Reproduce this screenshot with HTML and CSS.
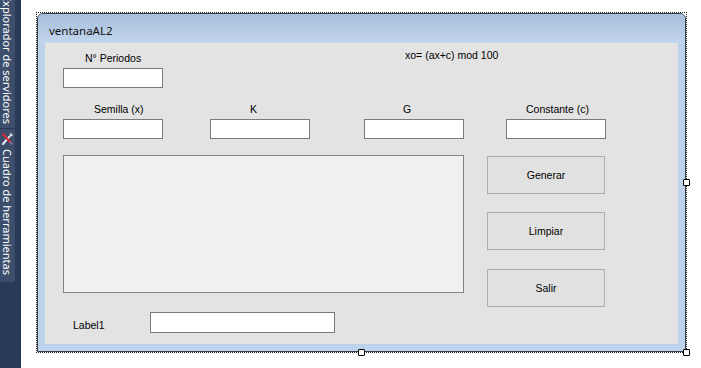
FILE: index.html
```html
<!DOCTYPE html>
<html lang="es">

<head>
    <meta charset="UTF-8">
    <meta name="viewport" content="width=device-width, initial-scale=1.0">
    <title>ventanaAL2 [Diseño]</title>
    <link rel="stylesheet" href="styles.css">
</head>

<body>
    <aside class="side-bar">
        <div class="side-tab side-tab-first">Explorador de servidores</div>
        <div class="side-tab side-tab-last">
            <svg class="tab-icon" width="13" height="14" viewBox="0 0 13 14">
                <path d="M2 12 L8 5" stroke="#e8e8f0" stroke-width="2" stroke-linecap="round" />
                <path d="M8 5 L11 2 M9 1.5 L11.5 4" stroke="#d8dbe6" stroke-width="1.6" />
                <path d="M2 2 L10 11" stroke="#d22a3a" stroke-width="2.2" stroke-linecap="round" />
                <path d="M9 10 L11.5 12.5" stroke="#6e7a90" stroke-width="2" />
            </svg>
            Cuadro de herramientas
        </div>
    </aside>

    <main class="canvas">
        <div class="selection">
            <div class="form-window">
                <div class="title-bar">ventanaAL2</div>
                <div class="client">
                    <span class="lbl lbl-periodos">N° Periodos</span>
                    <span class="lbl lbl-formula">xo= (ax+c) mod 100</span>
                    <div class="txt txt-periodos"></div>

                    <span class="lbl lbl-semilla">Semilla (x)</span>
                    <span class="lbl lbl-k">K</span>
                    <span class="lbl lbl-g">G</span>
                    <span class="lbl lbl-constante">Constante (c)</span>
                    <div class="txt txt-semilla"></div>
                    <div class="txt txt-k"></div>
                    <div class="txt txt-g"></div>
                    <div class="txt txt-constante"></div>

                    <div class="list-box"></div>

                    <div class="btn btn-generar">Generar</div>
                    <div class="btn btn-limpiar">Limpiar</div>
                    <div class="btn btn-salir">Salir</div>

                    <span class="lbl lbl-label1">Label1</span>
                    <div class="txt txt-label1"></div>
                </div>
            </div>
            <div class="grip grip-right"></div>
            <div class="grip grip-bottom"></div>
            <div class="grip grip-corner"></div>
        </div>
    </main>
</body>

</html>
```

FILE: styles.css
```css
html,
body {
    margin: 0;
    height: 100%;
}

body {
    display: flex;
    background: #ffffff;
    overflow: hidden;
}

/* barra lateral de Visual Studio */
.side-bar {
    width: 21px;
    height: 368px;
    flex: none;
    background-color: #293a56;
    background-image: radial-gradient(#3a4b68 0.6px, transparent 0.7px);
    background-size: 4px 4px;
    display: flex;
    flex-direction: column;
    overflow: hidden;
}

.side-tab {
    width: 15px;
    background: #3c4e6c;
    color: #ffffff;
    font-family: "Noto Sans", "Liberation Sans", sans-serif;
    font-size: 11px;
    line-height: 15px;
    writing-mode: vertical-rl;
    white-space: nowrap;
    display: flex;
    align-items: center;
    padding-bottom: 3px;
}

.side-tab-first {
    margin-top: -5px;
    padding-bottom: 4px;
    border-bottom: 1px solid #283853;
}

.side-tab-last {
    padding-top: 3px;
    padding-bottom: 7px;
}

.tab-icon {
    margin-bottom: 3px;
}

/* superficie del diseñador */
.canvas {
    flex: 1;
    padding: 12px 0 0 15px;
}

.selection {
    position: relative;
    width: 649px;
    height: 339px;
    border: 1px dotted #222222;
}

.form-window {
    height: 337px;
    border: 1px solid #3a3f47;
    border-radius: 6px 6px 0 0;
    background: #bdd3eb;
    display: flex;
    flex-direction: column;
}

.title-bar {
    height: 29px;
    flex: none;
    border-radius: 5px 5px 0 0;
    background: linear-gradient(#a6bedb, #c2d6ec);
    font-family: "Noto Sans", "Liberation Sans", sans-serif;
    font-size: 11.5px;
    line-height: 14px;
    color: #111111;
    padding: 10px 0 0 11px;
    box-sizing: border-box;
}

.client {
    position: relative;
    flex: 1;
    margin: 0 7px 7px 7px;
    background: #e3e3e3;
    font-family: "Liberation Sans", Arial, sans-serif;
    font-size: 10.5px;
    color: #000000;
}

.lbl {
    position: absolute;
    line-height: 13px;
    white-space: nowrap;
}

.lbl-periodos {
    left: 40px;
    top: 9px;
}

.lbl-formula {
    left: 360px;
    top: 6px;
}

.lbl-semilla {
    left: 49px;
    top: 60px;
}

.lbl-k {
    left: 205px;
    top: 60px;
}

.lbl-g {
    left: 358px;
    top: 60px;
}

.lbl-constante {
    left: 481px;
    top: 60px;
}

.lbl-label1 {
    left: 28px;
    top: 276px;
}

.txt {
    position: absolute;
    width: 98px;
    height: 18px;
    background: #ffffff;
    border: 1px solid #7a7a7a;
}

.txt-periodos {
    left: 18px;
    top: 25px;
}

.txt-semilla {
    left: 18px;
    top: 76px;
}

.txt-k {
    left: 165px;
    top: 76px;
}

.txt-g {
    left: 319px;
    top: 76px;
}

.txt-constante {
    left: 461px;
    top: 76px;
}

.txt-label1 {
    left: 105px;
    top: 269px;
    width: 183px;
    height: 19px;
}

.list-box {
    position: absolute;
    left: 18px;
    top: 112px;
    width: 399px;
    height: 136px;
    background: #f0f0f0;
    border: 1px solid #828282;
}

.btn {
    position: absolute;
    left: 442px;
    width: 116px;
    height: 36px;
    border: 1px solid #adadad;
    background: #e1e1e1;
    display: flex;
    align-items: center;
    justify-content: center;
}

.btn-generar {
    top: 113px;
}

.btn-limpiar {
    top: 169px;
}

.btn-salir {
    top: 226px;
}

/* asas de selección */
.grip {
    position: absolute;
    width: 5px;
    height: 5px;
    background: #ffffff;
    border: 1px solid #000000;
    border-radius: 1px;
}

.grip-right {
    right: -4px;
    top: 166px;
}

.grip-bottom {
    left: 321px;
    bottom: -4px;
}

.grip-corner {
    right: -4px;
    bottom: -4px;
}
```
